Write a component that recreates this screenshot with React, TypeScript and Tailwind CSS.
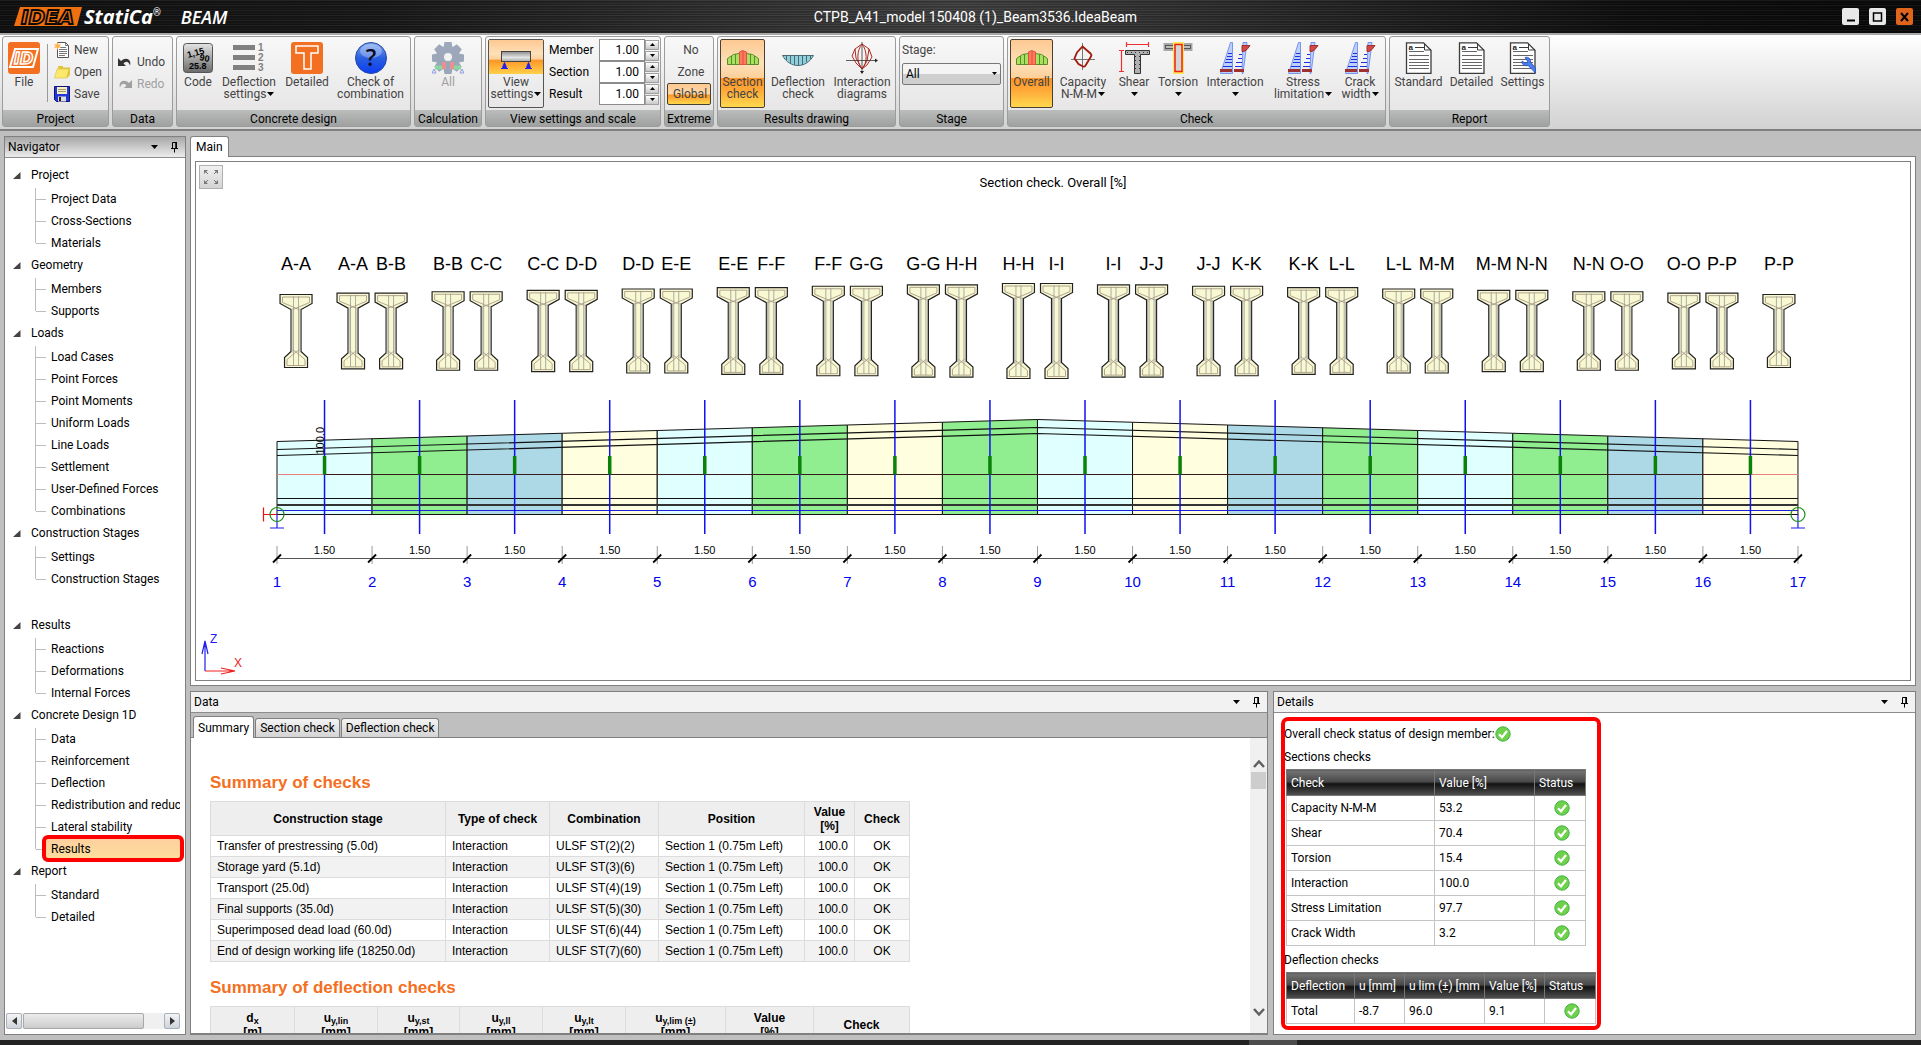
import React, { useState } from 'react';

const navTop = [
    { name: 'Project', items: ['Project Data', 'Cross-Sections', 'Materials'] },
    { name: 'Geometry', items: ['Members', 'Supports'] },
    { name: 'Loads', items: ['Load Cases', 'Point Forces', 'Point Moments', 'Uniform Loads', 'Line Loads', 'Settlement', 'User-Defined Forces', 'Combinations'] },
    { name: 'Construction Stages', items: ['Settings', 'Construction Stages'] },
];

const navBottom = [
    { name: 'Results', items: ['Reactions', 'Deformations', 'Internal Forces'] },
    { name: 'Concrete Design 1D', items: ['Data', 'Reinforcement', 'Deflection', 'Redistribution and reduc', 'Lateral stability', 'Results'] },
    { name: 'Report', items: ['Standard', 'Detailed'] },
];

const stages = [
    ['Transfer of prestressing (5.0d)', 'ULSF ST(2)(2)'],
    ['Storage yard (5.1d)', 'ULSF ST(3)(6)'],
    ['Transport (25.0d)', 'ULSF ST(4)(19)'],
    ['Final supports (35.0d)', 'ULSF ST(5)(30)'],
    ['Superimposed dead load (60.0d)', 'ULSF ST(6)(44)'],
    ['End of design working life (18250.0d)', 'ULSF ST(7)(60)'],
];

const sectionChecks = [
    ['Capacity N-M-M', '53.2'],
    ['Shear', '70.4'],
    ['Torsion', '15.4'],
    ['Interaction', '100.0'],
    ['Stress Limitation', '97.7'],
    ['Crack Width', '3.2'],
];

const CYAN = '#e0ffff';
const GREEN = '#90ee90';
const BLUE = '#add8e6';
const YELLOW = '#ffffe0';
const fills = [CYAN, GREEN, BLUE, YELLOW, CYAN, GREEN, YELLOW, GREEN, CYAN, YELLOW, BLUE, GREEN, CYAN, GREEN, BLUE, YELLOW];

// ---------- icons ----------

const FileIcon = () => (
    <svg width="32" height="32" viewBox="0 0 32 32">
        <rect width="32" height="32" rx="3" fill="#f36f21" />
        <path d="M7 7h23l-5 18H2z" fill="none" stroke="#fff" strokeWidth="2" />
        <text x="6" y="22" fontFamily="DejaVu Sans" fontSize="16" fontWeight="bold" fontStyle="italic" fill="#f36f21" stroke="#fff" strokeWidth="1.5">ID</text>
    </svg>
);

const NewIcon = () => (
    <svg width="16" height="16" viewBox="0 0 16 16">
        <path d="M3.5.5h8l3 3v12h-11z" fill="#fff" stroke="#555" />
        <path d="M11.500.5v3h3M6 5.500h6M5 7.500h8M5 9.500h8M5 11.500h8M5 13.500h6" fill="none" stroke="#777" />
        <path d="M3.500 0l1 2.500 2.500-.5-1.500 2 1.500 2-2.500-.5-1 2.500-1-2.500L0 6l1.500-2L0 2l2.500.5z" fill="#ffb14a" />
    </svg>
);

const OpenIcon = () => (
    <svg width="16" height="16" viewBox="0 0 16 16">
        <path d="M4 4V2h5v1.500h7V11l-3 3z" fill="#e0c43c" />
        <path d="M3 5h12l-2.500 9H.5z" fill="#fbe96b" stroke="#d9bf45" strokeWidth=".6" />
    </svg>
);

const SaveIcon = () => (
    <svg width="16" height="16" viewBox="0 0 16 16">
        <path d="M.5.5h15v15h-13l-2-2z" fill="#2438d8" stroke="#0d1478" />
        <rect x="3" y="1" width="10" height="7" fill="#f7efc4" />
        <path d="M4 3.500h8M4 5.500h8" stroke="#a59c6a" />
        <rect x="4" y="10.500" width="8" height="5" fill="#ddd" />
        <rect x="5" y="11" width="2" height="4" fill="#222" />
    </svg>
);

const UndoIcon = ({ flip, color }: any) => (
    <svg width="16" height="12" viewBox="0 0 16 12" className={flip ? '-scale-x-100' : ''}>
        <path d="M1 2v8h8L6.500 7.500C8.500 5 11.500 4.500 13 9.500 14.500 5 11 1 6 3.500L4 5z" fill={color} />
    </svg>
);

const CodeIcon = () => (
    <svg width="32" height="32" viewBox="0 0 32 32">
        <defs>
            <linearGradient id="code" x1="0" y1="0" x2="0" y2="1">
                <stop offset="0" stopColor="#e4e4e4" />
                <stop offset="1" stopColor="#6a6a6a" />
            </linearGradient>
        </defs>
        <rect x="1.500" y="1.500" width="29" height="29" rx="3" fill="url(#code)" stroke="#555" />
        <g fontFamily="Liberation Sans" fontWeight="bold" fontSize="9" fill="#000">
            <text x="6" y="16" transform="rotate(-15 6 16)">1,15</text>
            <text x="17" y="18" transform="rotate(12 17 18)">90</text>
            <text x="7" y="27">25.8</text>
        </g>
    </svg>
);

const DeflectionSettingsIcon = () => (
    <svg width="32" height="32" viewBox="0 0 32 32">
        <path d="M0 5.500h22M0 15.500h22M0 25.500h22" stroke="#808080" strokeWidth="5" />
        <g fontFamily="Liberation Sans" fontWeight="bold" fontSize="10" fill="#808080">
            <text x="25" y="9">1</text>
            <text x="25" y="19">2</text>
            <text x="25" y="29">3</text>
        </g>
    </svg>
);

const DetailedIcon = () => (
    <svg width="32" height="32" viewBox="0 0 32 32">
        <rect width="32" height="32" rx="3" fill="#f36f21" />
        <path d="M5 4h22v7h-7v16h-7V11H5z" fill="none" stroke="#fff" strokeWidth="1.500" />
    </svg>
);

const QuestionIcon = () => (
    <svg width="32" height="32" viewBox="0 0 32 32">
        <defs>
            <linearGradient id="ball" x1="0" y1="0" x2="0" y2="1">
                <stop offset="0" stopColor="#7fa8ee" />
                <stop offset=".5" stopColor="#2a5fe0" />
                <stop offset="1" stopColor="#0c3df0" />
            </linearGradient>
        </defs>
        <circle cx="16" cy="16" r="15.500" fill="url(#ball)" stroke="#2347a8" />
        <ellipse cx="16" cy="9" rx="11" ry="7" fill="#fff" opacity=".3" />
        <text x="16" y="24" textAnchor="middle" fontFamily="Open Sans" fontSize="23" fontWeight="600" fill="#0a0a20">?</text>
    </svg>
);

const teeth = [0, 45, 90, 135, 180, 225, 270, 315];

const GearIcon = () => (
    <svg width="32" height="32" viewBox="0 0 32 32" opacity=".65">
        <g fill="#6f7f9c">
            {teeth.map((a) => <path key={a} d="M12.500 0h7l1.500 8H11z" transform={`rotate(${a} 16 16)`} />)}
            <circle cx="16" cy="16" r="12" />
        </g>
        <circle cx="16" cy="15" r="4" fill="#f2f2f2" />
        <path d="M3 23.500h7v4H3zM22 23.500h7v4h-7z" fill="#58c878" />
        <path d="M10 20h4v7h-4zM18 20h4v7h-4z" fill="#e06060" />
        <path d="M2 27l-2 4h4zM30 27l-2 4h4z" fill="none" stroke="#6070e0" />
    </svg>
);

const ViewIcon = () => (
    <svg width="32" height="32" viewBox="0 0 32 32">
        <defs>
            <linearGradient id="bar" x1="0" y1="0" x2="0" y2="1">
                <stop offset="0" stopColor="#8c8c8c" />
                <stop offset=".6" stopColor="#e4e4e4" />
                <stop offset="1" stopColor="#a8a8a8" />
            </linearGradient>
        </defs>
        <rect x="1.500" y="9.500" width="29" height="10" fill="url(#bar)" stroke="#444" />
        <path d="M4.500 20.500l-2 5h4zM1 26.500h7M28.500 20.500l-2 5h4zM25 26.500h7" fill="#2020f0" stroke="#2020f0" />
    </svg>
);

const SectionIcon = () => (
    <svg width="32" height="32" viewBox="0 0 32 32">
        <path d="M.5 22.500V16.500l6-4 6-1v11zM19.500 22.500v-11l6 1 6 4v6z" fill="#a8e060" stroke="#5a8c2a" />
        <path d="M12.500 22.500V10l3-1.500 4 1.500v12.500z" fill="#ff7a5c" stroke="#e05040" />
        <path d="M4.500 14v8M8.500 12v10M23.500 12v10M27.500 14v8" stroke="#5a8c2a" />
        <path d="M16 9v13" stroke="#e05040" />
    </svg>
);

const DeflectionIcon = () => (
    <svg width="32" height="32" viewBox="0 0 32 32">
        <path d="M.5 13.500h31C28 20 22 23.500 16 23.500S4 20 .5 13.500z" fill="#8fd0dc" stroke="#4a6a74" />
        <path d="M4.500 14v4M8.500 14v7M12.500 14v9M16.500 14v9M20.500 14v9M24.500 14v6M28.500 14v3" stroke="#4a6a74" />
    </svg>
);

const InteractionDiagramIcon = () => (
    <svg width="32" height="32" viewBox="0 0 32 32">
        <path d="M16 2l7 5 3 8-5 8-5 4-6-6-4-7 3-7zM16 2c-5 6-6 18 0 25 6-6 5-19 0-25M9 7l1 9 6 11M23 7l-2 12-5 8" fill="none" stroke="#b02a20" />
        <path d="M0 18.500h30M16 0v30" stroke="#333" strokeWidth=".8" />
        <path d="M29 16.500l3 2-3 2zM14 29l2 3 2-3z" fill="#222" />
    </svg>
);

const CapacityIcon = () => (
    <svg width="32" height="32" viewBox="0 0 32 32">
        <path d="M4 17.500h24M15.500 1v27" stroke="#555" strokeWidth=".8" />
        <path d="M15.500 4.500l8 7q1.500 1.500.5 3l-5.500 9q-1 1.500-2.500 1l-4.500-2.500-4-5.500 2.500-6z" fill="none" stroke="#a01a10" strokeWidth="1.800" />
    </svg>
);

const ShearIcon = () => (
    <svg width="32" height="32" viewBox="0 0 32 32">
        <path d="M7.500 8.500h24v4h-9v19h-6v-19h-9z" fill="#b0b0b0" stroke="#333" />
        <path d="M17.500 14v16M21.500 14v16M9 10.500h21" stroke="#333" strokeDasharray="1 3" />
        <path d="M8 2.500h22M8.500 0v5M30.500 0v5M3.500 8v22M1 8.500h5M1 29.500h5" fill="none" stroke="#f03030" strokeWidth="1.200" />
    </svg>
);

const TorsionIcon = () => (
    <svg width="32" height="32" viewBox="0 0 32 32">
        <rect x="1.500" y="1" width="29" height="8" fill="#a9a9a9" />
        <rect x="3.500" y="3.500" width="25" height="3" fill="#bcbcbc" stroke="#555" />
        <rect x="11" y="0" width="11" height="32" fill="#ffe65a" />
        <rect x="13" y="2.500" width="7" height="27" fill="#d4d4d4" stroke="#f02010" strokeWidth="1.500" />
    </svg>
);

const StressIcon = () => (
    <svg width="32" height="32" viewBox="0 0 32 32">
        <path d="M11.500.5h2v31h-12zM24 .5h4L24 31.500h-1z" fill="#bcd0f8" stroke="#5f80f0" strokeWidth=".8" />
        <path d="M9 11.500h4M8 14.500h5M7 17.500h6M6 20.500h7M4 24.500h9M20 12.500h3M19 16.500h4M17 20.500h6M16 24.500h7" stroke="#2030e0" />
        <path d="M1 28.500h12M15 28.500h10" stroke="#a03030" strokeWidth="3" />
        <path d="M23 3.500h8l-3 4-3 2h-2z" fill="#d04848" stroke="#a03030" />
    </svg>
);

const PageIcon = ({ wrench }: any) => (
    <svg width="32" height="32" viewBox="0 0 32 32">
        <path d="M4 .8h16.500l7.500 7.500v23.200H3.500V.8z" fill="#fff" stroke="#3c3c3c" strokeWidth="1.300" />
        <path d="M21.500 1v7h6.500M12 5.500h9" fill="none" stroke="#3c3c3c" />
        <path d="M6 9.500h15M6 13.500h20M6 17.500h20M6 20.500h20M6 23.500h20M6 26.500h20" stroke="#666" />
        <text x="5.500" y="7.500" fontFamily="Liberation Sans" fontSize="8" fontWeight="bold" fill="#222">a</text>
        {wrench && <path d="M18 15.500c3-1 6 1 5.500 4.500l5 6v5l-7.500-7.500c-4 1-6.500-1.500-6-4.500l3 2 3-1z" fill="#4a7df0" stroke="#2850b0" strokeWidth=".8" />}
    </svg>
);

const Pin = () => (
    <svg width="9" height="12" viewBox="0 0 9 12">
        <path d="M2.500 7V1.500h4V7M1 7.500h7M4.500 8v3.500" fill="none" stroke="#000" />
        <path d="M6 1v6" stroke="#000" strokeWidth="1.500" />
    </svg>
);

const Caret = () => (
    <svg width="7" height="4" viewBox="0 0 7 4"><path d="M0 0h7L3.500 4z" fill="#000" /></svg>
);

const CheckMark = () => (
    <svg width="16" height="16" viewBox="0 0 16 16" role="img" aria-label="OK">
        <circle cx="8" cy="8" r="7.200" fill="#6fd04c" stroke="#43b343" />
        <path d="M4 8.300l3 3 5-6.300" fill="none" stroke="#fff" strokeWidth="2.200" />
    </svg>
);

// ---------- ribbon ----------

const Group = ({ title, children, className = '' }: any) => (
    <section className={`flex h-[91px] shrink-0 flex-col rounded-[3px] border border-[#9c9c9c] bg-linear-to-b from-[#f8f8f8] to-[#e4e2e3] ${className}`}>
        <div className="flex flex-1 px-[2px] pt-[2px]">{children}</div>
        <h2 className="h-4 shrink-0 bg-linear-to-b from-[#bbbdbc] to-[#9fa1a0] text-center leading-[18px] text-black">{title}</h2>
    </section>
);

const BigButton = ({ icon, lines, arrow, active, disabled, className = '' }: any) => (
    <button
        disabled={disabled}
        className={`flex h-[69px] shrink-0 flex-col items-center rounded-[2px] border pt-[2px] leading-3 whitespace-nowrap ${active
            ? 'border-[#4a4030] bg-[linear-gradient(180deg,#fdc992_0%,#fee0b8_35%,#fdd09a_56%,#fd9426_57%,#fea838_75%,#ffd84e_100%)]'
            : 'border-transparent'} ${disabled ? 'text-[#a0a0a0]' : 'text-[#444]'} ${className}`}
    >
        {icon}
        <span className="mt-[2px]">{lines[0]}</span>
        <span className="flex h-3 items-center gap-px">
            {lines[1]}
            {arrow && <Caret />}
        </span>
    </button>
);

const SmallButton = ({ icon, text, disabled }: any) => (
    <button disabled={disabled} className={`flex h-[22px] items-center gap-1 ${disabled ? 'text-[#a0a0a0]' : 'text-[#444]'}`}>
        {icon}
        {text}
    </button>
);

const Spinner = ({ label }: any) => {
    let [value, setValue] = useState('1.00');
    const step = (d: number) => setValue((Number(value) + d).toFixed(2));
    return (
        <div className="flex h-[22px] items-center">
            <label htmlFor={label} className="w-[50px] text-black">{label}</label>
            <input id={label} value={value} onChange={(e) => setValue(e.target.value)}
                className="h-[22px] w-[46px] border border-[#8c8c8c] bg-white pr-[5px] text-right text-black outline-none" />
            <div className="flex h-[21px] w-[14px] flex-col gap-px">
                <button aria-label={`${label} up`} onClick={() => step(0.1)} className="flex flex-1 items-center justify-center border border-[#a0a0a0] bg-linear-to-b from-white to-[#c8c8c8]">
                    <svg width="5" height="3" viewBox="0 0 5 3"><path d="M0 3h5L2.500 0z" /></svg>
                </button>
                <button aria-label={`${label} down`} onClick={() => step(-0.1)} className="flex flex-1 items-center justify-center border border-[#a0a0a0] bg-linear-to-b from-white to-[#c8c8c8]">
                    <svg width="5" height="3" viewBox="0 0 5 3"><path d="M0 0h5L2.500 3z" /></svg>
                </button>
            </div>
        </div>
    );
};

const Ribbon = () => (
    <div className="flex h-[98px] shrink-0 gap-[3px] border-t-2 border-b-2 border-t-[#a8a8a8] border-b-[#808080] bg-linear-to-b from-white to-[#d2d2d2] pt-px pl-[2px]">
        <Group title="Project" className="w-[107px]">
            <BigButton icon={<FileIcon />} lines={['File']} className="w-[38px]" />
            <div className="mt-[5px] mr-[6px] ml-[4px] h-[58px] w-px bg-[#999]" />
            <div className="flex flex-col">
                <SmallButton icon={<NewIcon />} text="New" />
                <SmallButton icon={<OpenIcon />} text="Open" />
                <SmallButton icon={<SaveIcon />} text="Save" />
            </div>
        </Group>
        <Group title="Data" className="w-[61px]">
            <div className="flex flex-col pt-3 pl-[2px]">
                <SmallButton icon={<UndoIcon color="#333" />} text="Undo" />
                <SmallButton icon={<UndoIcon color="#a0a0a0" flip />} text="Redo" disabled />
            </div>
        </Group>
        <Group title="Concrete design">
            <BigButton icon={<CodeIcon />} lines={['Code']} className="w-[38px]" />
            <BigButton icon={<DeflectionSettingsIcon />} lines={['Deflection', 'settings']} arrow className="w-16" />
            <BigButton icon={<DetailedIcon />} lines={['Detailed']} className="w-[52px]" />
            <BigButton icon={<QuestionIcon />} lines={['Check of', 'combination']} className="w-[75px]" />
        </Group>
        <Group title="Calculation" className="w-[68px]">
            <BigButton icon={<GearIcon />} lines={['All']} disabled className="w-full" />
        </Group>
        <Group title="View settings and scale" className="w-[176px]">
            <button className="flex h-[69px] w-14 shrink-0 flex-col items-center overflow-hidden rounded-[2px] border border-[#555] leading-3 text-[#444]">
                <span className="flex w-full justify-center bg-[linear-gradient(180deg,#fdc992_0%,#fee0b8_40%,#fdd09a_57%,#fd9426_58%,#ffd04a_100%)] pt-[2px]"><ViewIcon /></span>
                <span className="mt-[2px]">View</span>
                <span className="flex h-3 items-center gap-px">settings<Caret /></span>
            </button>
            <div className="ml-[5px] flex flex-col">
                <Spinner label="Member" />
                <Spinner label="Section" />
                <Spinner label="Result" />
            </div>
        </Group>
        <Group title="Extreme" className="w-[50px]">
            <div className="flex w-full flex-col text-[#444]">
                <button className="h-[22px] pl-1">No</button>
                <button className="h-[22px] pl-1">Zone</button>
                <button className="h-[22px] rounded-[2px] border border-[#4a4030] bg-[linear-gradient(180deg,#fdc992_0%,#fdd8a8_50%,#fd9426_55%,#ffd84e_100%)] pl-[2px]">Global</button>
            </div>
        </Group>
        <Group title="Results drawing">
            <BigButton icon={<SectionIcon />} lines={['Section', 'check']} active className="w-[45px]" />
            <BigButton icon={<DeflectionIcon />} lines={['Deflection', 'check']} className="w-[66px]" />
            <BigButton icon={<InteractionDiagramIcon />} lines={['Interaction', 'diagrams']} className="w-[62px]" />
        </Group>
        <Group title="Stage" className="w-[105px]">
            <div className="flex w-full flex-col">
                <label htmlFor="stage" className="h-6 pt-px leading-5 text-[#444]">Stage:</label>
                <div className="relative">
                    <select id="stage" className="h-[22px] w-full appearance-none rounded-[2px] border border-[#777] bg-linear-to-b from-[#f4f4f4] from-50% to-[#cfcfcf] to-50% pl-[3px] text-black outline-none">
                        <option>All</option>
                    </select>
                    <span className="pointer-events-none absolute top-[9px] right-[4px]">
                        <svg width="5" height="3" viewBox="0 0 5 3"><path d="M0 0h5L2.500 3z" /></svg>
                    </span>
                </div>
            </div>
        </Group>
        <Group title="Check">
            <BigButton icon={<SectionIcon />} lines={['Overall']} active className="w-[43px]" />
            <BigButton icon={<CapacityIcon />} lines={['Capacity', 'N-M-M']} arrow className="w-[60px]" />
            <BigButton icon={<ShearIcon />} lines={['Shear']} arrow className="w-[42px]" />
            <BigButton icon={<TorsionIcon />} lines={['Torsion']} arrow className="w-[46px]" />
            <BigButton icon={<StressIcon />} lines={['Interaction']} arrow className="w-[68px]" />
            <BigButton icon={<StressIcon />} lines={['Stress', 'limitation']} arrow className="w-[68px]" />
            <BigButton icon={<StressIcon />} lines={['Crack', 'width']} arrow className="w-[46px]" />
        </Group>
        <Group title="Report">
            <BigButton icon={<PageIcon />} lines={['Standard']} className="w-[53px]" />
            <BigButton icon={<PageIcon />} lines={['Detailed']} className="w-[53px]" />
            <BigButton icon={<PageIcon wrench />} lines={['Settings']} className="w-[49px]" />
        </Group>
    </div>
);

const TitleBar = () => (
    <header className="flex h-[33px] shrink-0 items-center bg-[repeating-linear-gradient(180deg,rgba(255,255,255,0.1)_0px,rgba(0,0,0,0.4)_2px,rgba(255,255,255,0.05)_3px,rgba(0,0,0,0.3)_5px),linear-gradient(90deg,#0c0c0c_0%,#161616_20%,#444_50%,#303030_62%,#0a0a0a_85%,#040404_100%)] pr-2 pl-[14px] text-white">
        <div className="flex flex-1 items-center">
            <svg width="68" height="20" viewBox="0 0 68 20">
                <path d="M6 0h62l-5 19H0z" fill="#f07010" />
                <text x="7" y="17" fontFamily="DejaVu Sans" fontSize="20" fontWeight="bold" fontStyle="italic" fill="#f07010" stroke="#0a0a0a" strokeWidth="1.8">IDEA</text>
            </svg>
            <span className="ml-[2px] font-['Open_Sans'] text-[20px] leading-5 font-bold italic">StatiCa</span>
            <span className="self-start text-[10px] leading-3">®</span>
            <span className="ml-5 font-['Open_Sans'] text-lg leading-5 font-semibold italic">BEAM</span>
        </div>
        <h1 className="pl-6 text-sm">CTPB_A41_model 150408 (1)_Beam3536.IdeaBeam</h1>
        <div className="flex flex-1 justify-end gap-[10px]">
            <button aria-label="Minimize" className="h-[17px] w-[17px] rounded-[2px] bg-[#e8e8e8]">
                <svg viewBox="0 0 17 17"><path d="M5 12.500h8" stroke="#000" strokeWidth="2" /></svg>
            </button>
            <button aria-label="Maximize" className="h-[17px] w-[17px] rounded-[2px] bg-[#e8e8e8]">
                <svg viewBox="0 0 17 17"><rect x="4.500" y="5" width="8" height="8" fill="none" stroke="#000" strokeWidth="1.500" /></svg>
            </button>
            <button aria-label="Close" className="h-[17px] w-[17px] rounded-[2px] bg-[#e0641c]">
                <svg viewBox="0 0 17 17"><path d="M5 5l7 8M12 5l-7 8" stroke="#000" strokeWidth="2" /></svg>
            </button>
        </div>
    </header>
);

// ---------- navigator ----------

const NavGroup = ({ group, selected, onSelect }: any) => (
    <li>
        <div className="flex h-[22px] items-center pl-2">
            <svg width="8" height="7" viewBox="0 0 8 7"><path d="M7.500 0v7H0z" fill="#444" /></svg>
            <span className="ml-[10px]">{group.name}</span>
        </div>
        <ul className="pt-[2px] pl-[30px]">
            {group.items.map((item: string, i: number) => {
                const key = group.name + '/' + item;
                const isLast = i === group.items.length - 1;
                return (
                    <li key={item} className="relative flex h-[22px] items-center">
                        <span className={`w-px self-start bg-[#bdbdbd] ${isLast ? 'h-[11px]' : 'h-[22px]'}`} />
                        <span className="h-px w-[10px] shrink-0 bg-[#bdbdbd]" />
                        <button
                            onClick={() => onSelect(key)}
                            className={`h-[21px] flex-1 overflow-hidden pl-[5px] text-left whitespace-nowrap ${selected === key ? 'bg-linear-to-b from-[#fecf9f] to-[#fbe09c]' : ''}`}
                        >
                            {item}
                        </button>
                        {selected === key && <span className="pointer-events-none absolute -top-[3px] -right-[4px] left-[7px] h-[27px] rounded-[6px] border-4 border-[#ff0000]" />}
                    </li>
                );
            })}
        </ul>
    </li>
);

const PanelHeader = ({ title, className = '' }: any) => (
    <div className={`flex h-[21px] shrink-0 items-center border-b border-[#8c8c8c] pr-[6px] pl-[3px] text-black ${className}`}>
        <span className="flex-1">{title}</span>
        <button aria-label={`${title} menu`} className="mr-3"><Caret /></button>
        <button aria-label={`Pin ${title}`}><Pin /></button>
    </div>
);

const Navigator = () => {
    let [selected, setSelected] = useState('Concrete Design 1D/Results');
    return (
        <nav className="flex w-[182px] shrink-0 flex-col border border-[#808080] bg-white text-black">
            <PanelHeader title="Navigator" className="bg-linear-to-b from-[#a8a8a8] to-[#ececec]" />
            <div className="flex-1 overflow-hidden pt-[6px] pr-[5px]">
                <ul>
                    {navTop.map((g) => <NavGroup key={g.name} group={g} selected={selected} onSelect={setSelected} />)}
                </ul>
                <ul className="mt-6">
                    {navBottom.map((g) => <NavGroup key={g.name} group={g} selected={selected} onSelect={setSelected} />)}
                </ul>
            </div>
            <div className="mx-px mb-[5px] flex h-4 w-[174px] shrink-0 bg-[#f0f0f0]">
                <button aria-label="Scroll left" className="flex w-4 items-center justify-center rounded-[2px] border border-[#a8b0bc] bg-linear-to-b from-[#f4f4f4] to-[#cfd3da]">
                    <svg width="5" height="8" viewBox="0 0 5 8"><path d="M5 0v8L0 4z" fill="#333" /></svg>
                </button>
                <div className="ml-px w-[121px] rounded-[2px] border border-[#a8a8a8] bg-linear-to-b from-[#ececec] to-[#cccccc]" />
                <div className="flex-1" />
                <button aria-label="Scroll right" className="flex w-4 items-center justify-center rounded-[2px] border border-[#a8b0bc] bg-linear-to-b from-[#f4f4f4] to-[#cfd3da]">
                    <svg width="5" height="8" viewBox="0 0 5 8"><path d="M0 0v8l5-4z" fill="#333" /></svg>
                </button>
            </div>
        </nav>
    );
};

// ---------- drawing ----------

const X0 = 278;
const STEP = 95.06;
const nodeX = (i: number) => X0 + STEP * i;
const rise = (i: number) => 22 * (1 - Math.abs(8 - i) / 8);

// cross-section of the girder taken at node j
const Girder = ({ cx, j }: any) => {
    const half = rise(j) / 2;
    const t = 294.5 - half;
    const b = 367.5 + half;
    return (
        <g fill="none">
            <path
                d={`M${cx - 16} ${t}H${cx + 16}V${t + 9}L${cx + 5} ${t + 15}V${b - 16}L${cx + 11.5} ${b - 10}V${b}H${cx - 11.5}V${b - 10}L${cx - 5} ${b - 16}V${t + 15}L${cx - 16} ${t + 9}Z`}
                fill="#f8f8d2" stroke="#222" strokeWidth="1.2"
            />
            <path d={`M${cx - 2.5} ${t + 2}V${b - 2}M${cx + 2.5} ${t + 2}V${b - 2}M${cx - 4} ${t + 14}V${b - 15}M${cx + 4} ${t + 14}V${b - 15}`} stroke="#999" strokeWidth=".8" />
            <path d={`M${cx + 3} ${t + 15}L${cx - 13.5} ${t + 8}V${t + 2.500}H${cx + 13.500}V${t + 8}L${cx - 3} ${t + 15}`} stroke="#a09080" strokeWidth=".8" />
            <path d={`M${cx + 3} ${b - 18}L${cx - 9} ${b - 8}V${b - 2}H${cx + 9}V${b - 8}L${cx - 3} ${b - 18}`} stroke="#a09080" strokeWidth=".8" />
        </g>
    );
};

const slopeLine = (y: number) => `M${nodeX(0)} ${y}L${nodeX(8)} ${y - 22}L${nodeX(16)} ${y}`;

const BeamDrawing = () => (
    <svg className="h-full w-full font-['Liberation_Sans']" viewBox="197 162 1714 518">
        <text x="1054" y="187" textAnchor="middle" fontFamily="Roboto" fontSize="13">Section check. Overall [%]</text>

        {fills.map((fill, i) => (
            <path key={i} d={`M${nodeX(i)} 514.5V${441.5 - rise(i)}L${nodeX(i + 1)} ${441.5 - rise(i + 1)}V514.5Z`} fill={fill} stroke="#111" />
        ))}
        <path d={slopeLine(449.5) + slopeLine(455.5)} fill="none" stroke="#111" strokeWidth="1.2" />
        <path d={`M${X0} 474.5H${nodeX(16)}`} stroke="#e88080" />
        <path d={`M${nodeX(0.5)} 474.5H${nodeX(15.5)}`} stroke="#3a1a1a" />
        <path d={`M${X0} 498.500H${nodeX(16)}`} stroke="#111" strokeWidth="1.200" />
        <path d={`M${X0} 505H${nodeX(16)}`} stroke="#333" strokeWidth="2" />
        <path d={`M${X0} 510.500H${nodeX(16)}`} stroke="#2020e0" />

        {fills.map((_, i) => {
            const mid = nodeX(i + 0.5);
            const name = String.fromCharCode(65 + i);
            return (
                <g key={i}>
                    <path d={`M${mid} 400V534`} stroke="#1010f0" strokeWidth="1.5" />
                    <path d={`M${mid} 456V474.5`} stroke="#0a820a" strokeWidth="3.5" />
                    <Girder cx={mid - 28.5} j={i} />
                    <Girder cx={mid + 28.5} j={i + 1} />
                    <g fontSize="18" textAnchor="middle">
                        <text x={mid - 28.5} y="269.500">{name}-{name}</text>
                        <text x={mid + 28.5} y="269.500">{name}-{name}</text>
                    </g>
                    <text x={mid} y="554" fontSize="11" textAnchor="middle">1.50</text>
                </g>
            );
        })}
        <text transform="translate(325 454.500) rotate(-90)" fontSize="11">100.0</text>

        <path d={`M${X0} 558.500H${nodeX(16)}`} stroke="#555" />
        {[...fills, ''].map((_, i) => (
            <g key={i}>
                <path d={`M${nodeX(i)} 546v18`} stroke="#999" />
                <path d={`M${nodeX(i) - 4} 562.500l8-8`} stroke="#000" strokeWidth="1.800" />
                <text x={nodeX(i)} y="587" fontSize="15" textAnchor="middle" fill="#0000f0">{i + 1}</text>
            </g>
        ))}

        <g fill="none" strokeWidth="1.2">
            <path d="M264 514.500h14M264.500 507.500v14" stroke="#f01010" />
            <path d={`M${X0} 514v14m-7 0h14M${nodeX(16)} 514v14m-7 0h14`} stroke="#2020f0" />
            <circle cx={X0} cy="514.500" r="7" stroke="#1a901a" />
            <circle cx={nodeX(16)} cy="514.500" r="7" stroke="#1a901a" />
            <path d="M206 671V641m-3 13l3-13 3 13" stroke="#2020f0" />
            <path d="M206 671h30m-14-3l14 3-14 3" stroke="#f02020" />
        </g>
        <text x="211" y="643" fontSize="12" fill="#2020f0">Z</text>
        <text x="235" y="667" fontSize="12" fill="#f02020">X</text>
    </svg>
);

// ---------- bottom panels ----------

const tabs = ['Summary', 'Section check', 'Deflection check'];

const deflectionHeads = [
    { s: 'd', sub: 'x', unit: '[m]', w: 'w-[84px]' },
    { s: 'u', sub: 'y,lin', unit: '[mm]', w: 'w-[83px]' },
    { s: 'u', sub: 'y,st', unit: '[mm]', w: 'w-[82px]' },
    { s: 'u', sub: 'y,ll', unit: '[mm]', w: 'w-[83px]' },
    { s: 'u', sub: 'y,lt', unit: '[mm]', w: 'w-[83px]' },
    { s: 'u', sub: 'y,lim (±)', unit: '[mm]', w: 'w-[100px]' },
    { s: 'Value', sub: '', unit: '[%]', w: 'w-[88px]' },
];

const DataPanel = () => {
    let [tab, setTab] = useState('Summary');
    const head = 'border border-[#dcdcdc] bg-[#eee] p-0 text-center font-bold';
    const cell = 'h-[21px] border border-[#dcdcdc] px-1.5 py-0 leading-4';
    return (
        <section className="flex min-w-0 flex-1 flex-col border border-b-2 border-[#808080] bg-[#bfbfbf]">
            <PanelHeader title="Data" className="bg-[#f2f2f2]" />
            <div role="tablist" className="flex h-[25px] shrink-0 items-end gap-px border-b border-[#808080] pl-[2px] text-black">
                {tabs.map((t) => (
                    <button key={t} role="tab" aria-selected={tab === t} onClick={() => setTab(t)}
                        className={`rounded-t-[3px] border border-b-0 border-[#808080] px-1 ${tab === t ? '-mb-px h-[22px] bg-white' : 'h-[19px] bg-linear-to-b from-[#f4f4f4] to-[#d4d4d4]'}`}>
                        {t}
                    </button>
                ))}
            </div>
            <div className="flex min-h-0 flex-1 bg-white font-['Liberation_Sans'] text-black">
                <div className="min-w-0 flex-1 overflow-hidden pt-[33px] pl-[19px]">
                    <h2 className="text-[17px] leading-6 font-bold text-[#f36f21]">Summary of checks</h2>
                    <table className="mt-[6px] w-[700px] table-fixed border-collapse border border-[#ccc]">
                        <thead>
                            <tr className="h-[34px] leading-[14px]">
                                <th className={`w-[235px] ${head}`}>Construction stage</th>
                                <th className={`w-[104px] ${head}`}>Type of check</th>
                                <th className={`w-[109px] ${head}`}>Combination</th>
                                <th className={`w-[146px] ${head}`}>Position</th>
                                <th className={`w-[50px] ${head}`}>Value<br />[%]</th>
                                <th className={`w-[55px] ${head}`}>Check</th>
                            </tr>
                        </thead>
                        <tbody>
                            {stages.map(([stage, combination]) => (
                                <tr key={stage} className="even:bg-[#f2f2f2]">
                                    <td className={cell}>{stage}</td>
                                    <td className={cell}>Interaction</td>
                                    <td className={cell}>{combination}</td>
                                    <td className={cell}>Section 1 (0.75m Left)</td>
                                    <td className={`${cell} text-right`}>100.0</td>
                                    <td className={`${cell} text-center`}>OK</td>
                                </tr>
                            ))}
                        </tbody>
                    </table>
                    <h2 className="mt-[14px] text-[17px] leading-6 font-bold text-[#f36f21]">Summary of deflection checks</h2>
                    <table className="mt-[6px] w-[700px] table-fixed border-collapse border border-[#ccc]">
                        <thead>
                            <tr className="h-[36px] leading-[14px]">
                                {deflectionHeads.map((h, i) => (
                                    <th key={i} className={`${h.w} ${head}`}>
                                        {h.s}{h.sub && <sub className="bottom-[-2px] text-[9px] leading-0">{h.sub}</sub>}<br />{h.unit}
                                    </th>
                                ))}
                                <th className={`w-[96px] ${head}`}>Check</th>
                            </tr>
                        </thead>
                    </table>
                </div>
                <div className="flex w-[17px] shrink-0 flex-col items-center bg-[#f0f0f0] pt-4 pb-4">
                    <button aria-label="Scroll up" className="h-[18px]">
                        <svg width="12" height="9" viewBox="0 0 12 9"><path d="M1 8l5-5.500L11 8" fill="none" stroke="#606060" strokeWidth="2.500" /></svg>
                    </button>
                    <div className="h-[17px] w-[15px] bg-[#cdcdcd]" />
                    <div className="flex-1" />
                    <button aria-label="Scroll down">
                        <svg width="12" height="9" viewBox="0 0 12 9"><path d="M1 1l5 5.500L11 1" fill="none" stroke="#606060" strokeWidth="2.500" /></svg>
                    </button>
                </div>
            </div>
        </section>
    );
};

const DetailsPanel = () => {
    const head = 'h-[26px] overflow-hidden border border-[#777] bg-[linear-gradient(180deg,#747474_0%,#484848_46%,#101010_52%,#525252_100%)] p-0 pl-[4px] text-left font-normal whitespace-nowrap text-white';
    const cell = 'h-[25px] border border-[#c4c4c4] p-0 pl-[4px]';
    return (
        <section className="flex w-[643px] shrink-0 flex-col border border-[#808080] bg-white">
            <PanelHeader title="Details" className="bg-[#f2f2f2]" />
            <div className="relative flex-1 pt-3 pl-[10px] text-black">
                <div className="flex h-[18px] items-center">
                    Overall check status of design member: <CheckMark />
                </div>
                <h3 className="mt-[5px] mb-[3px] h-[18px] leading-[18px]">Sections checks</h3>
                <table className="ml-[2px] w-[299px] table-fixed border-collapse border border-[#777]">
                    <thead>
                        <tr>
                            <th className={`w-[148px] ${head}`}>Check</th>
                            <th className={`w-[100px] ${head}`}>Value [%]</th>
                            <th className={`w-[51px] ${head}`}>Status</th>
                        </tr>
                    </thead>
                    <tbody>
                        {sectionChecks.map(([name, value]) => (
                            <tr key={name}>
                                <td className={cell}>{name}</td>
                                <td className={cell}>{value}</td>
                                <td className={cell}><span className="flex justify-center"><CheckMark /></span></td>
                            </tr>
                        ))}
                    </tbody>
                </table>
                <h3 className="mt-[5px] mb-[3px] h-[18px] leading-[18px]">Deflection checks</h3>
                <table className="ml-[2px] w-[309px] table-fixed border-collapse border border-[#777]">
                    <thead>
                        <tr>
                            <th className={`w-[68px] ${head}`}>Deflection</th>
                            <th className={`w-[50px] ${head}`}>u [mm]</th>
                            <th className={`w-[80px] ${head}`}>u lim (±) [mm</th>
                            <th className={`w-[60px] ${head}`}>Value [%]</th>
                            <th className={`w-[51px] ${head}`}>Status</th>
                        </tr>
                    </thead>
                    <tbody>
                        <tr>
                            <td className={cell}>Total</td>
                            <td className={cell}>-8.7</td>
                            <td className={cell}>96.0</td>
                            <td className={cell}>9.1</td>
                            <td className={cell}><span className="flex justify-center"><CheckMark /></span></td>
                        </tr>
                    </tbody>
                </table>
                <div className="pointer-events-none absolute top-1 bottom-1 left-[7px] w-[320px] rounded-[7px] border-4 border-[#ff0000]" />
            </div>
        </section>
    );
};

function App() {
    return (
        <div className="flex h-screen flex-col overflow-hidden bg-[#bfbfbf] font-['Roboto',sans-serif] text-xs">
            <TitleBar />
            <Ribbon />
            <div className="flex min-h-0 flex-1 gap-1 py-[5px] pr-[5px] pl-1">
                <Navigator />
                <main className="flex min-w-0 flex-1 flex-col">
                    <div role="tablist" className="flex h-5 shrink-0">
                        <button role="tab" aria-selected="true" className="z-10 -mb-px h-[21px] rounded-t-[3px] border border-b-0 border-[#808080] bg-white px-[5px] text-black">Main</button>
                    </div>
                    <div className="min-h-0 flex-1 border border-[#808080] bg-white p-1">
                        <div className="relative h-full border border-[#808080]">
                            <button aria-label="Zoom to fit" className="absolute top-[3px] left-[3px] h-6 w-6 border border-[#b0b0b0] bg-linear-to-b from-[#f0f0f0] to-[#d4d4d4]">
                                <svg viewBox="0 0 22 22">
                                    <path d="M4 4h4L4 8zM18 4h-4l4 4zM4 18h4l-4-4zM18 18h-4l4-4z" fill="#777" />
                                    <path d="M5 5l3 3M17 5l-3 3M5 17l3-3M17 17l-3-3" stroke="#777" />
                                </svg>
                            </button>
                            <BeamDrawing />
                        </div>
                    </div>
                    <div className="mt-[5px] flex h-[344px] shrink-0 gap-[5px]">
                        <DataPanel />
                        <DetailsPanel />
                    </div>
                </main>
            </div>
            <footer className="flex h-[5px] shrink-0 bg-[#222]">
                <div className="ml-[65%] h-full w-12 bg-[#4c4c4c]" />
            </footer>
        </div>
    );
}

export default App;
